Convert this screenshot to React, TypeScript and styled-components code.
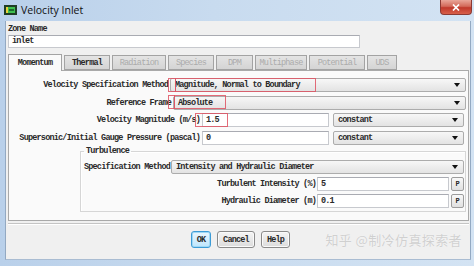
import styled, { createGlobalStyle } from 'styled-components';

const Global = createGlobalStyle`
  html, body { margin: 0; padding: 0; overflow: hidden; background: #c3d7ed; }
  * { box-sizing: border-box; }
`;

const mono = `"Liberation Mono", "DejaVu Sans Mono", monospace`;

const tabs = [
  { name: 'Momentum', w: 54, active: true },
  { name: 'Thermal', w: 46 },
  { name: 'Radiation', w: 54, off: true },
  { name: 'Species', w: 46, off: true },
  { name: 'DPM', w: 37, off: true },
  { name: 'Multiphase', w: 52, off: true },
  { name: 'Potential', w: 56, off: true },
  { name: 'UDS', w: 30, off: true },
];

const Arrow = () => (
  <svg width="6" height="4" viewBox="0 0 6 4">
    <path d="M0 0 L6 0 L3 4 Z" fill="#111" />
  </svg>
);

export default () => {
  return (
    <Window>
      <Global />
      <TitleBar>
        <AppIcon width="13" height="10" viewBox="0 0 13 10">
          <rect x="0" y="0" width="13" height="10" fill="#1f3d24" />
          <rect x="2" y="2" width="9" height="6" fill="#3fbf4f" />
          <rect x="2" y="2" width="2" height="6" fill="#e8d23a" />
          <rect x="5" y="4" width="5" height="2" fill="#1d6b2b" />
        </AppIcon>
        <Title>Velocity Inlet</Title>
        <CloseBtn>
          <svg width="8" height="7" viewBox="0 0 8 7">
            <path d="M1 0.5 L7 6.5 M7 0.5 L1 6.5" stroke="#fff" strokeWidth="1.7" />
          </svg>
        </CloseBtn>
      </TitleBar>
      <Client>
        <Caption>Zone Name</Caption>
        <ZoneInput>inlet</ZoneInput>
        <TabStrip>
          {tabs.map((t) => (
            <Tab key={t.name} $w={t.w} $active={!!t.active} $off={!!t.off}>
              {t.name}
            </Tab>
          ))}
        </TabStrip>
        <Panel>
          <Row>
            <Label $w={156}>Velocity Specification Method</Label>
            <Combo>
              Magnitude, Normal to Boundary
              <Arrow />
            </Combo>
          </Row>
          <Row>
            <Label $w={159}>Reference Frame</Label>
            <Combo>
              Absolute
              <Arrow />
            </Combo>
          </Row>
          <Row>
            <Label $w={188}>Velocity Magnitude (m/s)</Label>
            <Entry $w={127}>1.5</Entry>
            <Combo $w={131}>
              constant
              <Arrow />
            </Combo>
          </Row>
          <Row>
            <Label $w={188}>Supersonic/Initial Gauge Pressure (pascal)</Label>
            <Entry $w={127}>0</Entry>
            <Combo $w={131}>
              constant
              <Arrow />
            </Combo>
          </Row>
          <GroupBox>
            <Legend>Turbulence</Legend>
            <Row $gap={2}>
              <Label $w={88}>Specification Method</Label>
              <Combo>
                Intensity and Hydraulic Diameter
                <Arrow />
              </Combo>
            </Row>
            <Row $gap={2}>
              <Label $w={234}>Turbulent Intensity (%)</Label>
              <Entry>5</Entry>
              <PBtn>P</PBtn>
            </Row>
            <Row $gap={2}>
              <Label $w={234}>Hydraulic Diameter (m)</Label>
              <Entry>0.1</Entry>
              <PBtn>P</PBtn>
            </Row>
          </GroupBox>
          <Highlight $x={159} $y={7} $w={8} $h={14} />
          <Highlight $x={166} $y={7} $w={141} $h={14} />
          <Highlight $x={159} $y={24} $w={7} $h={14} />
          <Highlight $x={165} $y={24} $w={52} $h={14} />
          <Highlight $x={186} $y={42} $w={33} $h={14} />
        </Panel>
        <Separator />
        <Footer>
          <Button $w={20} $default>
            OK
          </Button>
          <Button $w={38}>Cancel</Button>
          <Button $w={29}>Help</Button>
          <Watermark>知乎 @制冷仿真探索者</Watermark>
        </Footer>
      </Client>
    </Window>
  );
};

const Window = styled.div`
  width: 474px;
  height: 266px;
  display: flex;
  flex-direction: column;
  padding: 0 3px 6px 5px;
  background: linear-gradient(90deg, #b9d0ea 0%, #c8dbef 45%, #d3e3f3 100%);
  overflow: hidden;
`;

const TitleBar = styled.div`
  height: 21px;
  flex: none;
  display: flex;
  align-items: flex-start;
  margin-left: -5px;
  margin-right: -3px;
`;

const AppIcon = styled.svg`
  margin: 5px 4px 0 4px;
  flex: none;
`;

const Title = styled.div`
  margin-top: 3px;
  font-family: 'Open Sans', 'Noto Sans', sans-serif;
  font-size: 10.5px;
  line-height: 14px;
  color: #111;
`;

const CloseBtn = styled.div`
  margin-left: auto;
  margin-right: 2px;
  width: 32px;
  height: 15px;
  display: flex;
  align-items: center;
  justify-content: center;
  background: linear-gradient(180deg, #e9a699 0%, #d36a5a 45%, #c0392b 55%, #d8604a 100%);
  border: 1px solid #8c3a33;
  border-top: none;
  border-radius: 0 0 4px 4px;
`;

const Client = styled.div`
  flex: 1;
  display: flex;
  flex-direction: column;
  background: #f0f0f0;
  border: 1px solid #93a9c2;
  border-top: none;
  border-bottom-color: #a9bcd2;
  padding: 3px 1px 0 2px;
  font-family: ${mono};
  font-size: 8.5px;
  font-weight: bold;
  letter-spacing: -0.8px;
  color: #2a2a2a;
`;

const Caption = styled.div`
  height: 10px;
  line-height: 10px;
`;

const ZoneInput = styled.div`
  margin-top: 1px;
  width: 352px;
  height: 13px;
  line-height: 11px;
  padding-left: 3px;
  background: #fff;
  border: 1px solid #c7c9ce;
  border-top-color: #a9abb2;
`;

const TabStrip = styled.div`
  margin-top: 7px;
  height: 15px;
  display: flex;
  align-items: flex-end;
  gap: 2px;
`;

const Tab = styled.div<{ $w: number; $active: boolean; $off: boolean }>`
  position: relative;
  z-index: ${(p) => (p.$active ? 1 : 0)};
  width: ${(p) => p.$w}px;
  height: ${(p) => (p.$active ? 17 : 15)}px;
  margin-bottom: ${(p) => (p.$active ? -1 : 0)}px;
  display: flex;
  align-items: center;
  justify-content: center;
  padding-bottom: ${(p) => (p.$active ? 1 : 0)}px;
  border: 1px solid #a3a3a3;
  border-bottom: ${(p) => (p.$active ? 'none' : '1px solid #a3a3a3')};
  background: ${(p) => (p.$active ? '#fafafa' : 'linear-gradient(#e4e4e4, #d4d4d4)')};
  color: ${(p) => (p.$off ? '#ababab' : '#2a2a2a')};
  font-weight: ${(p) => (p.$off ? 'normal' : 'bold')};
`;

const Panel = styled.div`
  position: relative;
  height: 151px;
  flex: none;
  display: flex;
  flex-direction: column;
  gap: 3.6px;
  padding: 7px 2px 0 3px;
  background: #fafafa;
  border: 1px solid #a9a9a9;
`;

const Row = styled.div<{ $gap?: number }>`
  height: 14px;
  display: flex;
  align-items: stretch;
  gap: ${(p) => p.$gap ?? 3}px;
`;

const Label = styled.div<{ $w: number }>`
  flex: none;
  width: ${(p) => p.$w}px;
  text-align: right;
  line-height: 14px;
  white-space: nowrap;
  margin-right: -1px;
`;

const Combo = styled.div<{ $w?: number }>`
  flex: ${(p) => (p.$w ? 'none' : '1')};
  width: ${(p) => (p.$w ? `${p.$w}px` : 'auto')};
  margin-left: ${(p) => (p.$w ? 1 : 0)}px;
  display: flex;
  align-items: center;
  justify-content: space-between;
  padding: 0 5px 0 4px;
  white-space: nowrap;
  background: linear-gradient(#f7f7f7, #e3e3e3);
  border: 1px solid #acacac;
  border-radius: 2px;
`;

const Entry = styled.div<{ $w?: number }>`
  flex: ${(p) => (p.$w ? 'none' : '1')};
  width: ${(p) => (p.$w ? `${p.$w}px` : 'auto')};
  line-height: 12px;
  padding-left: 3px;
  background: #fff;
  border: 1px solid #c7c9ce;
  border-top-color: #a9abb2;
`;

const GroupBox = styled.fieldset`
  margin: -2px 0 0 68px;
  padding: 4px 1px 0 1px;
  height: 66px;
  display: flex;
  flex-direction: column;
  gap: 3px;
  border: 1px solid #d6d6d6;
  box-shadow: inset 1px 1px 0 #fff;
  min-width: 0;
`;

const Legend = styled.legend`
  margin-left: 2px;
  padding: 0 2px;
  line-height: 10px;
`;

const PBtn = styled.div`
  flex: none;
  width: 13px;
  display: flex;
  align-items: center;
  justify-content: center;
  font-size: 7px;
  letter-spacing: 0;
  background: linear-gradient(#f8f8f8, #e0e0e0);
  border: 1px solid #9c9c9c;
  border-radius: 2px;
`;

const Highlight = styled.div<{ $x: number; $y: number; $w: number; $h: number }>`
  position: absolute;
  left: ${(p) => p.$x}px;
  top: ${(p) => p.$y}px;
  width: ${(p) => p.$w}px;
  height: ${(p) => p.$h}px;
  border: 1.5px solid rgba(222, 82, 98, 0.85);
  pointer-events: none;
`;

const Separator = styled.div`
  margin-top: 2px;
  height: 2px;
  border-top: 1px solid #c4c4c4;
  border-bottom: 1px solid #fff;
`;

const Footer = styled.div`
  position: relative;
  flex: 1;
  display: flex;
  justify-content: center;
  align-items: flex-start;
  gap: 6px;
  padding-top: 6px;
  padding-left: 4px;
`;

const Button = styled.div<{ $w: number; $default?: boolean }>`
  width: ${(p) => p.$w}px;
  height: 17px;
  display: flex;
  align-items: center;
  justify-content: center;
  background: ${(p) => (p.$default ? 'linear-gradient(#eaf6fd, #bee6fd)' : 'linear-gradient(#f4f4f4, #dcdcdc)')};
  border: 1px solid ${(p) => (p.$default ? '#3c9bd6' : '#8a8a8a')};
  box-shadow: ${(p) => (p.$default ? 'inset 0 0 0 1px #9fd8f5' : 'inset 0 0 0 1px #fafafa')};
  border-radius: 3px;
`;

const Watermark = styled.div`
  position: absolute;
  right: 7px;
  top: 7px;
  font-family: 'Noto Sans CJK SC', 'Noto Sans', sans-serif;
  font-size: 13px;
  font-weight: normal;
  line-height: 16px;
  letter-spacing: 0.4px;
  color: #d0d0d0;
  text-shadow: 0 0 1px #fff;
`;
